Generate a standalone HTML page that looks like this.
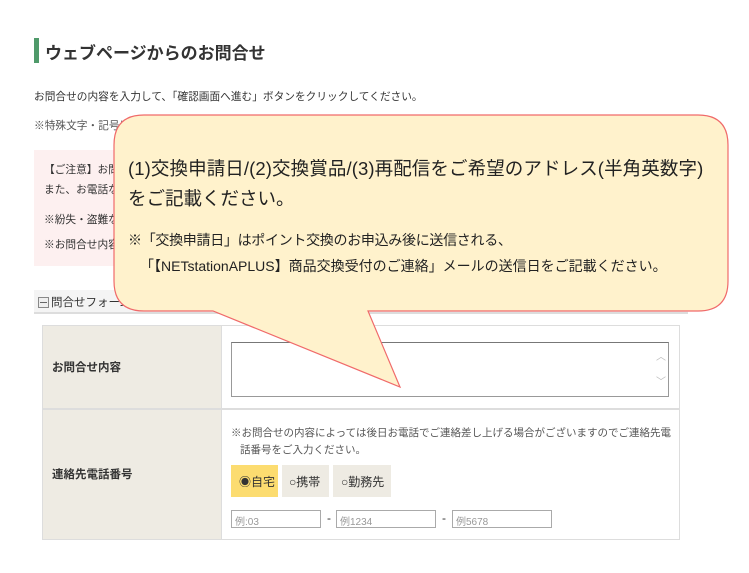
<!DOCTYPE html>
<html><head><meta charset="utf-8"><style>
*{margin:0;padding:0;box-sizing:border-box}
body{width:749px;height:573px;background:#fff;position:relative;overflow:hidden;font-family:"Liberation Sans","Noto Sans CJK JP",sans-serif;color:#333}
.a{position:absolute;white-space:nowrap}
</style></head><body>
<div class="a" style="left:34px;top:38px;width:5px;height:25px;background:#4f9a6a"></div>
<div class="a" style="left:45px;top:39px;font-size:17px;font-weight:bold;color:#333">ウェブページからのお問合せ</div>
<div class="a" style="left:34px;top:89px;font-size:10.7px">お問合せの内容を入力して、「確認画面へ進む」ボタンをクリックしてください。</div>
<div class="a" style="left:34px;top:118px;font-size:10.7px;color:#555">※特殊文字・記号は</div>
<div class="a" style="left:34px;top:150px;width:654px;height:116px;background:#fdf0f0"></div>
<div class="a" style="left:44px;top:162px;font-size:10.7px">【ご注意】お問</div>
<div class="a" style="left:44px;top:182px;font-size:10.7px">また、お電話な</div>
<div class="a" style="left:44px;top:212px;font-size:10.7px">※紛失・盗難な</div>
<div class="a" style="left:44px;top:237px;font-size:10.7px">※お問合せ内容</div>
<div class="a" style="left:34px;top:290px;width:654px;height:24px;background:#f4f4f4;border-bottom:2px solid #ddd"></div>
<div class="a" style="left:38px;top:297px;width:11px;height:11px;border:1px solid #888;background:#eee"></div>
<div class="a" style="left:40px;top:302px;width:7px;height:1px;background:#666"></div>
<div class="a" style="left:51px;top:294px;font-size:11.5px">問合せフォーム</div>
<div class="a" style="left:42px;top:325px;width:638px;height:215px;border:1px solid #ddd;background:#fff"></div>
<div class="a" style="left:43px;top:326px;width:178px;height:213px;background:#eeebe3"></div>
<div class="a" style="left:43px;top:408px;width:636px;height:2px;background:#ddd"></div>
<div class="a" style="left:221px;top:326px;width:1px;height:213px;background:#ddd"></div>
<div class="a" style="left:52px;top:359px;font-size:11.5px;font-weight:bold">お問合せ内容</div>
<div class="a" style="left:52px;top:466px;font-size:11.5px;font-weight:bold">連絡先電話番号</div>
<div class="a" style="left:231px;top:342px;width:438px;height:55px;border:1px solid #999;border-top-color:#777"></div>
<div class="a" style="left:656px;top:345px;font-size:10px;color:#bbb;line-height:25px">︿<br>﹀</div>
<div class="a" style="left:231px;top:425px;font-size:10.5px;color:#555">※お問合せの内容によっては後日お電話でご連絡差し上げる場合がございますのでご連絡先電</div>
<div class="a" style="left:240px;top:442px;font-size:10.5px;color:#555">話番号をご入力ください。</div>
<div class="a" style="left:231px;top:465px;width:47px;height:32px;background:#fcdc70"></div>
<div class="a" style="left:282px;top:465px;width:47px;height:32px;background:#eeebe3"></div>
<div class="a" style="left:333px;top:465px;width:58px;height:32px;background:#eeebe3"></div>
<div class="a" style="left:239px;top:473px;font-size:12px">◉自宅</div>
<div class="a" style="left:289px;top:473px;font-size:12px">○携帯</div>
<div class="a" style="left:341px;top:473px;font-size:12px">○勤務先</div>
<div class="a" style="left:231px;top:510px;width:90px;height:18px;border:1px solid #aaa;font-size:10px;color:#999;padding:2px 3px">例:03</div>
<div class="a" style="left:327px;top:511px;font-size:12px">-</div>
<div class="a" style="left:336px;top:510px;width:100px;height:18px;border:1px solid #aaa;font-size:10px;color:#999;padding:2px 3px">例1234</div>
<div class="a" style="left:442px;top:511px;font-size:12px">-</div>
<div class="a" style="left:452px;top:510px;width:100px;height:18px;border:1px solid #aaa;font-size:10px;color:#999;padding:2px 3px">例5678</div>
<svg class="a" style="left:0;top:0" width="749" height="573"><path d="M144,115 H698 Q728,115 728,145 V281 Q728,311 698,311 H368 L400,387 L213,311 H144 Q114,311 114,281 V145 Q114,115 144,115 Z" fill="#fff2cc" stroke="#f06a6a" stroke-width="1.2"/></svg>
<div class="a" style="left:128px;top:155px;font-size:18.5px;color:#222;letter-spacing:0.1px">(1)交換申請日/(2)交換賞品/(3)再配信をご希望のアドレス(半角英数字)</div>
<div class="a" style="left:128px;top:185px;font-size:18.5px;color:#222">をご記載ください。</div>
<div class="a" style="left:128px;top:230px;font-size:14px;color:#222;letter-spacing:-0.3px">※「交換申請日」はポイント交換のお申込み後に送信される、</div>
<div class="a" style="left:140px;top:256px;font-size:14px;color:#222">「【NETstationAPLUS】商品交換受付のご連絡」メールの送信日をご記載ください。</div>
</body></html>
